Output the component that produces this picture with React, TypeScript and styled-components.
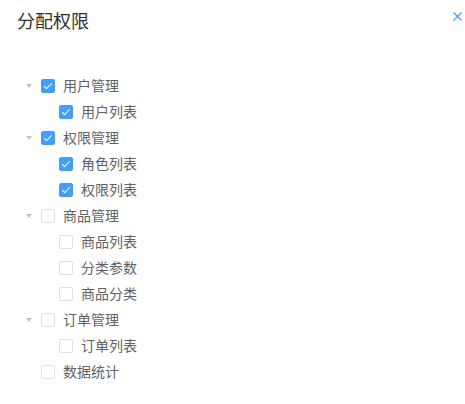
import React from 'react';
import styled, { createGlobalStyle } from 'styled-components';

interface TreeNode {
  label: string;
  checked: boolean;
  children?: TreeNode[];
}

const data: TreeNode[] = [
  {
    label: '用户管理',
    checked: true,
    children: [{ label: '用户列表', checked: true }],
  },
  {
    label: '权限管理',
    checked: true,
    children: [
      { label: '角色列表', checked: true },
      { label: '权限列表', checked: true },
    ],
  },
  {
    label: '商品管理',
    checked: false,
    children: [
      { label: '商品列表', checked: false },
      { label: '分类参数', checked: false },
      { label: '商品分类', checked: false },
    ],
  },
  {
    label: '订单管理',
    checked: false,
    children: [{ label: '订单列表', checked: false }],
  },
  { label: '数据统计', checked: false },
];

const GlobalStyle = createGlobalStyle`
  html, body {
    margin: 0;
    padding: 0;
    background: #fff;
  }
  body {
    font-family: "Helvetica Neue", "Liberation Sans", "Noto Sans CJK SC", sans-serif;
  }
`;

const Dialog = styled.div`
  position: relative;
  width: 465px;
  height: 404px;
  background: #fff;
  box-sizing: border-box;
`;

const Header = styled.div`
  padding: 10px 17px 10px;
`;

const Title = styled.span`
  display: block;
  font-size: 18px;
  line-height: 24px;
  color: #303133;
`;

const CloseButton = styled.button`
  position: absolute;
  top: 10px;
  right: 2px;
  width: 12px;
  height: 12px;
  padding: 0;
  border: none;
  background: transparent;
  cursor: pointer;
  display: flex;
  align-items: center;
  justify-content: center;
`;

const Body = styled.div`
  padding: 29px 17px 20px;
`;

const Row = styled.div<{ $level: number }>`
  display: flex;
  align-items: center;
  height: 26px;
  padding-left: ${({ $level }) => $level * 18}px;
  font-size: 14px;
  color: #606266;
  cursor: pointer;
`;

const ExpandIcon = styled.span<{ $leaf: boolean }>`
  display: flex;
  align-items: center;
  justify-content: center;
  width: 12px;
  height: 12px;
  padding: 6px;
  visibility: ${({ $leaf }) => ($leaf ? 'hidden' : 'visible')};
`;

const Caret = styled.span`
  width: 0;
  height: 0;
  border-left: 3.5px solid transparent;
  border-right: 3.5px solid transparent;
  border-top: 4px solid #c0c4cc;
  margin-left: -1px;
`;

const Checkbox = styled.span<{ $checked: boolean }>`
  position: relative;
  box-sizing: border-box;
  width: 14px;
  height: 14px;
  margin-right: 8px;
  border-radius: 2px;
  border: 1px solid ${({ $checked }) => ($checked ? '#409eff' : '#dcdfe6')};
  background: ${({ $checked }) => ($checked ? '#409eff' : '#fff')};

  &::after {
    content: '';
    display: ${({ $checked }) => ($checked ? 'block' : 'none')};
    position: absolute;
    left: 4px;
    top: 1px;
    width: 3px;
    height: 7px;
    border: 1px solid #fff;
    border-left: 0;
    border-top: 0;
    transform: rotate(45deg);
  }
`;

const Label = styled.span`
  line-height: 26px;
`;

const renderNodes = (nodes: TreeNode[], level: number): React.ReactNode[] =>
  nodes.flatMap((node) => [
    <Row key={`${level}-${node.label}`} $level={level}>
      <ExpandIcon $leaf={!node.children}>
        <Caret />
      </ExpandIcon>
      <Checkbox $checked={node.checked} />
      <Label>{node.label}</Label>
    </Row>,
    ...(node.children ? renderNodes(node.children, level + 1) : []),
  ]);

const App = () => {
  return (
    <>
      <GlobalStyle />
      <Dialog>
        <Header>
          <Title>分配权限</Title>
          <CloseButton aria-label="Close">
            <svg width="9" height="9" viewBox="0 0 9 9">
              <path d="M0.5 0.5 L8.5 8.5 M8.5 0.5 L0.5 8.5" stroke="#409eff" strokeWidth="1.1" />
            </svg>
          </CloseButton>
        </Header>
        <Body>{renderNodes(data, 0)}</Body>
      </Dialog>
    </>
  );
};

export default App;
